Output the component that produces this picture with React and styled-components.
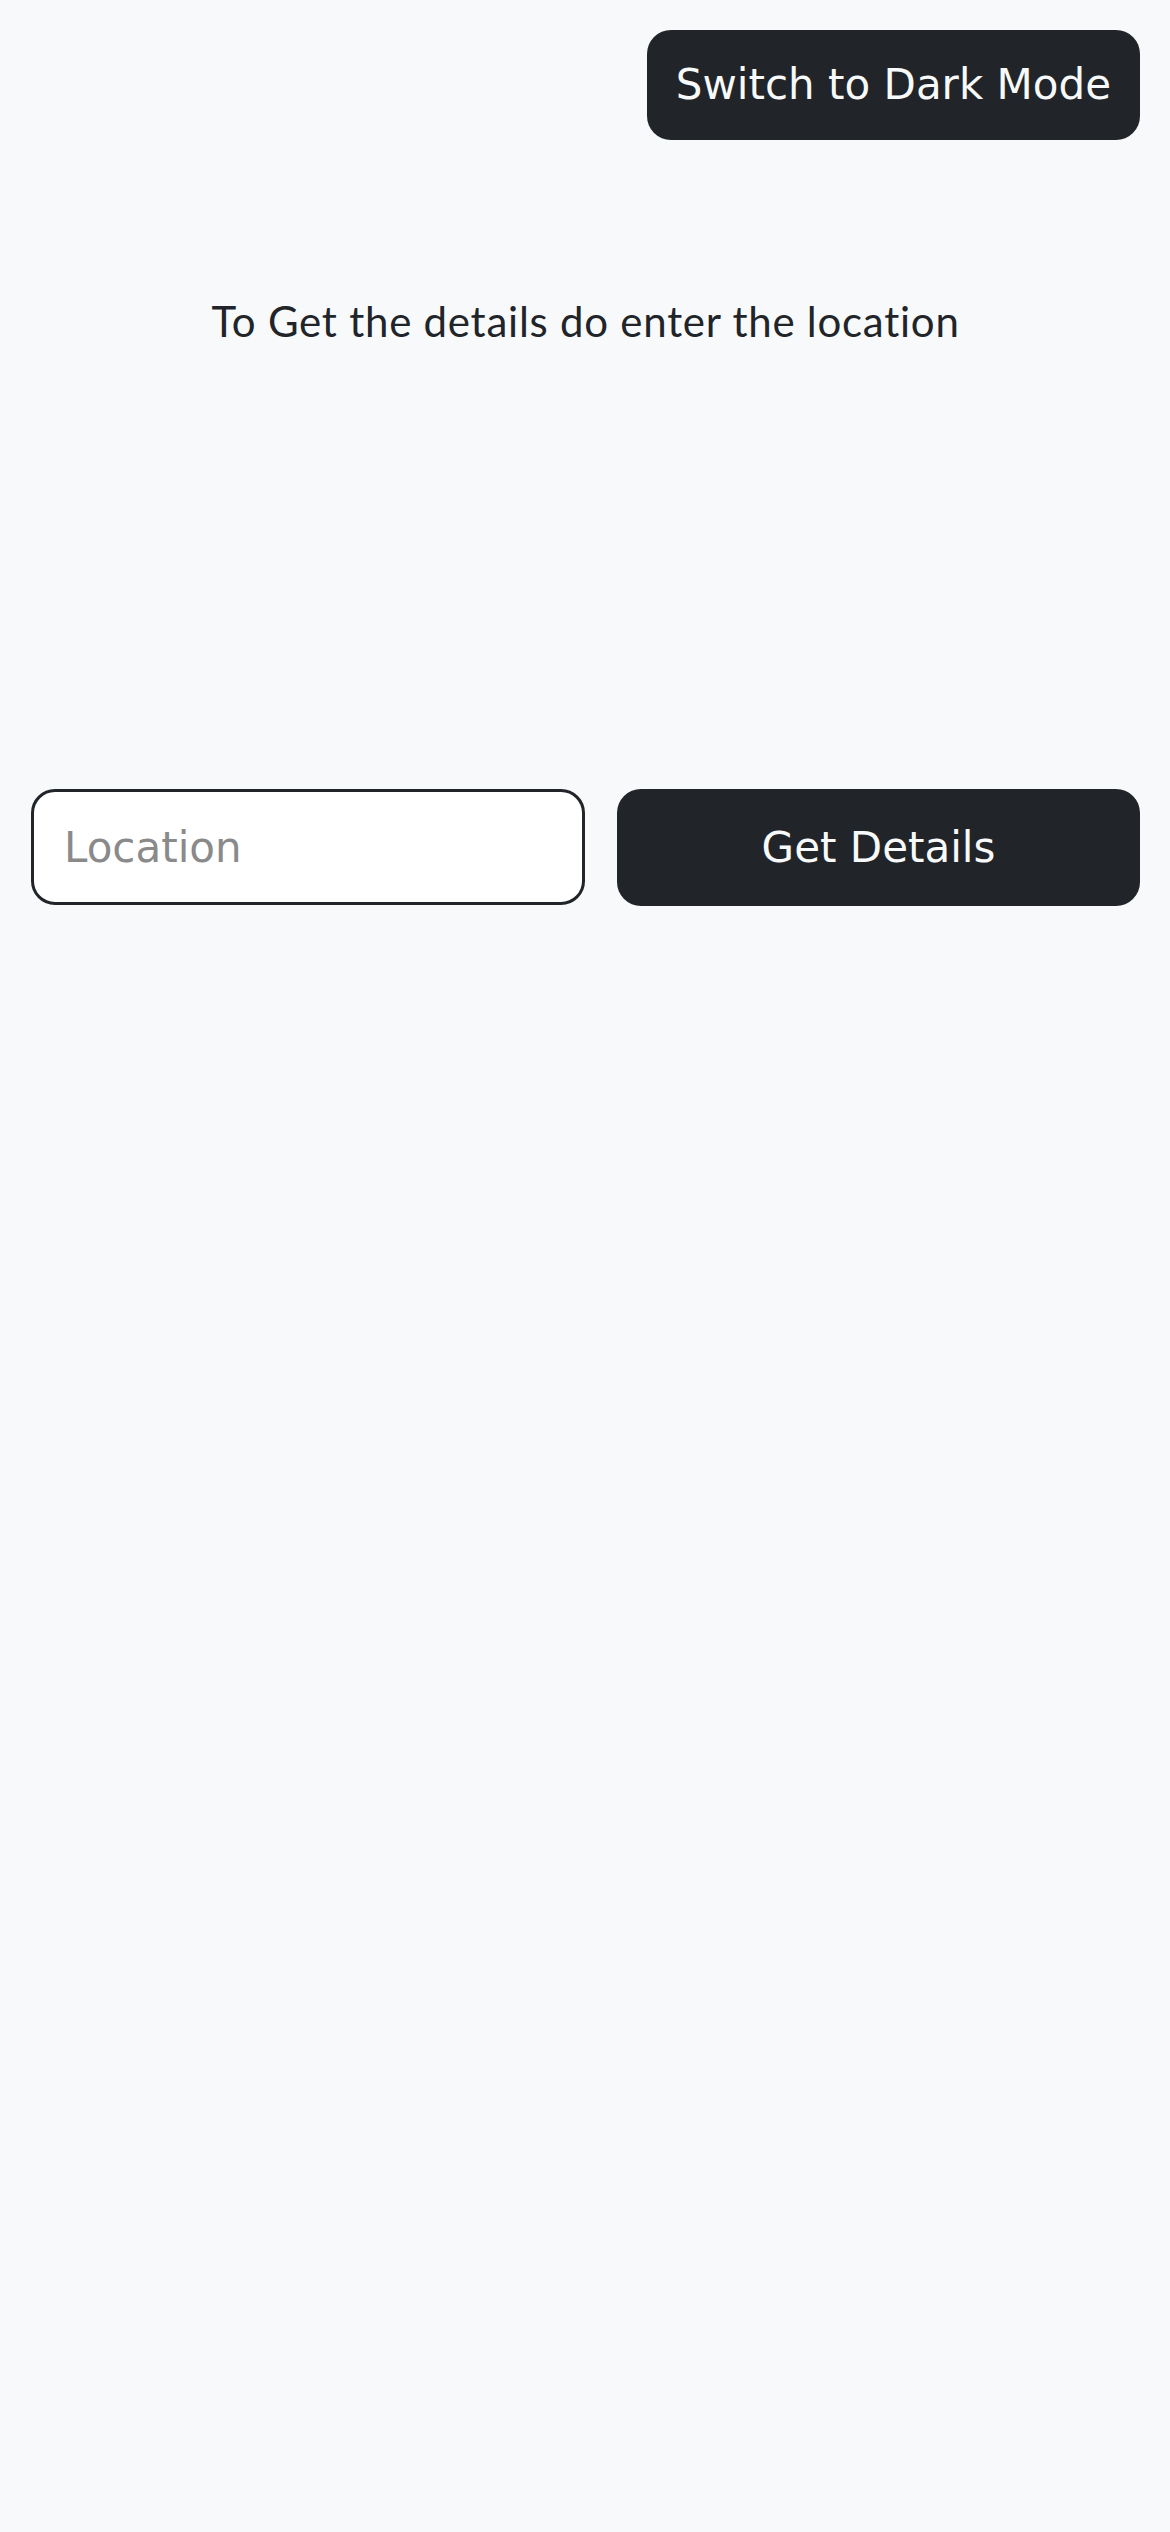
import React from "react";
import styled, { createGlobalStyle } from "styled-components";

const Global = createGlobalStyle`
  html, body { margin: 0; padding: 0; background: #f8f9fa; }
  * { box-sizing: border-box; }
`;

const Page = styled.div`
  min-height: 2532px;
  background: #f8f9fa;
  padding: 30px 30px 0 31px;
  font-family: "DejaVu Sans", sans-serif;
  color: #212529;
`;

const TopBar = styled.div`
  display: flex;
  justify-content: flex-end;
`;

const DarkButton = styled.button`
  border: none;
  background: #212529;
  color: #f8f9fa;
  font-family: "DejaVu Sans", sans-serif;
  font-size: 42px;
  line-height: 1;
  height: ${(p) => p.$h}px;
  padding: 0 29px;
  border-radius: 24px;
  cursor: pointer;
  ${(p) => (p.$grow ? "flex: 1;" : "")}
`;

const Heading = styled.p`
  margin: 156px 0 0;
  text-align: center;
  font-family: Lato, "Open Sans", sans-serif;
  font-size: 42px;
  line-height: 1.2;
  letter-spacing: 0.75px;
  font-variant-ligatures: none;
  color: #212529;
`;

const FormRow = styled.div`
  display: flex;
  gap: 32px;
  margin-top: 443px;
  align-items: flex-start;
`;

const LocationInput = styled.input`
  width: 554px;
  height: 116px;
  border: 3px solid #212529;
  border-radius: 24px;
  background: #fff;
  padding: 0 30px;
  font-family: "DejaVu Sans", sans-serif;
  font-size: 42px;
  color: #212529;
  outline: none;
  &::placeholder { color: #8a8a8a; }
`;

export default function App() {
  return (
    <>
      <Global />
      <Page>
        <TopBar>
          <DarkButton $h={110}>Switch to Dark Mode</DarkButton>
        </TopBar>
        <Heading>To Get the details do enter the location</Heading>
        <FormRow>
          <LocationInput placeholder="Location" />
          <DarkButton $h={117} $grow>Get Details</DarkButton>
        </FormRow>
      </Page>
    </>
  );
}
